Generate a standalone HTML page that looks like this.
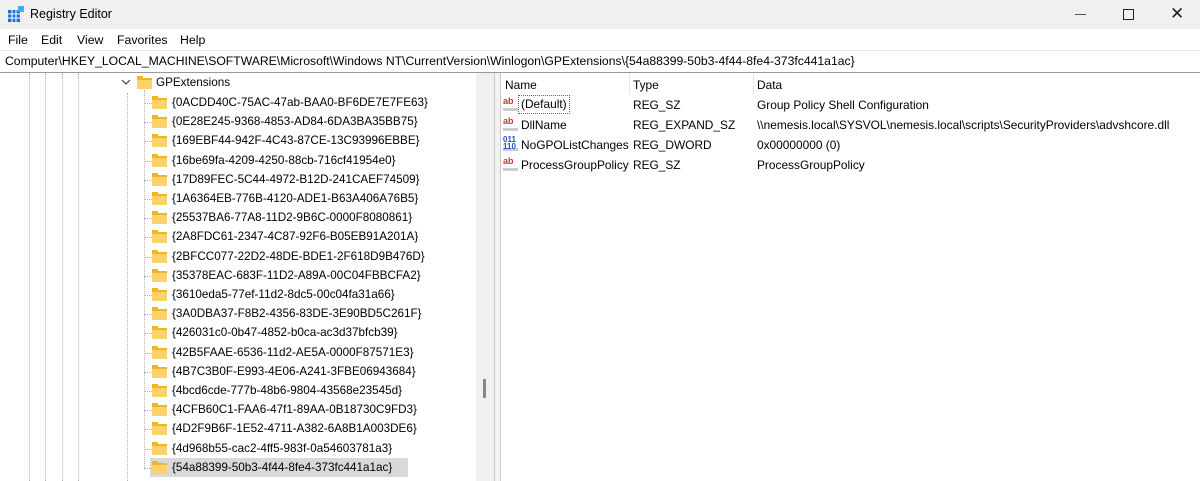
<!DOCTYPE html><html><head><style>
body{margin:0;width:1200px;height:481px;overflow:hidden;background:#fff;font-family:"Liberation Sans",sans-serif;font-size:11.7px;color:#000;position:relative}
.a{position:absolute;white-space:nowrap}
.r{font-size:11.9px}
.fold{position:absolute;width:15px;height:11px;background:#fcd36a;border-top:2px solid #f0b429;box-sizing:border-box}
.fold:before{content:"";position:absolute;left:0;top:-4px;width:6px;height:3px;background:#f0b429}
.vd{position:absolute;width:0;border-left:1px dotted #b0b0b0}
.hd{position:absolute;height:0;border-top:1px dotted #b0b0b0;width:8px}
.ic{position:absolute;width:15px;height:15px;font-size:9px;font-weight:bold;color:#c0392b;line-height:10px;border-bottom:3px solid #ccc;box-sizing:border-box}
</style></head><body>
<div class="a" style="left:0;top:0;width:1200px;height:29px;background:#f0f0f0"></div>
<svg class="a" style="left:8px;top:6px" width="16" height="16"><rect x="0" y="4" width="12" height="12" fill="#1e73d2"/><g stroke="#fff" stroke-width="1"><line x1="0" y1="8" x2="12" y2="8"/><line x1="0" y1="12" x2="12" y2="12"/><line x1="4" y1="4" x2="4" y2="16"/><line x1="8" y1="4" x2="8" y2="16"/></g><rect x="10" y="0" width="6" height="6" fill="#4aa8f0"/></svg>
<div class="a" style="left:30px;top:7px;font-size:12.5px">Registry Editor</div>
<div class="a" style="left:1075px;top:14px;width:11px;border-top:1px solid #555"></div>
<div class="a" style="left:1123px;top:9px;width:9px;height:9px;border:1px solid #222"></div>
<div class="a" style="left:1170px;top:4px;font-size:17px;color:#222">✕</div>
<div class="a" style="left:8px;top:33px;font-size:12.3px">File</div><div class="a" style="left:41px;top:33px;font-size:12.3px">Edit</div><div class="a" style="left:77px;top:33px;font-size:12.3px">View</div><div class="a" style="left:117px;top:33px;font-size:12.3px">Favorites</div><div class="a" style="left:180px;top:33px;font-size:12.3px">Help</div>
<div class="a" style="left:0;top:50px;width:1200px;height:21px;border-top:1px solid #e8e8e8;border-bottom:1px solid #999"></div>
<div class="a" style="left:5px;top:54px;font-size:12.2px">Computer\HKEY_LOCAL_MACHINE\SOFTWARE\Microsoft\Windows NT\CurrentVersion\Winlogon\GPExtensions\{54a88399-50b3-4f44-8fe4-373fc441a1ac}</div>
<div class="vd" style="left:29px;top:73px;height:408px"></div><div class="vd" style="left:45px;top:73px;height:408px"></div><div class="vd" style="left:62px;top:73px;height:408px"></div><div class="vd" style="left:78px;top:73px;height:408px"></div><div class="vd" style="left:127px;top:93px;height:388px"></div><div class="vd" style="left:144px;top:90px;height:378px"></div>
<svg class="a" style="left:121px;top:78px" width="10" height="8"><path d="M1 2L5 6L9 2" stroke="#333" fill="none"/></svg>
<div class="fold" style="left:137px;top:78px"></div><div class="a" style="left:156px;top:76px">GPExtensions</div>
<div class="a" style="left:150px;top:458px;width:258px;height:19px;background:#d9d9d9"></div>
<div id="t"></div>
<div class="a" style="left:476px;top:73px;width:18px;height:408px;background:#f0f0f0"></div>
<div class="a" style="left:483px;top:379px;width:3px;height:19px;background:#888"></div>
<div class="a" style="left:494px;top:73px;width:5px;height:408px;background:#f2f2f2;border-left:1px solid #c8c8c8;border-right:1px solid #c8c8c8"></div>
<div class="a r" style="left:505px;top:78px">Name</div><div class="a r" style="left:633px;top:78px">Type</div><div class="a r" style="left:757px;top:78px">Data</div>
<div class="a" style="left:629px;top:74px;height:20px;border-left:1px solid #e5e5e5"></div><div class="a" style="left:753px;top:74px;height:20px;border-left:1px solid #e5e5e5"></div>
<div class="ic" style="left:503px;top:96px">ab</div><div class="a r" style="left:518px;top:95px;border:1px dotted #666;padding:1px 2px;line-height:15px">(Default)</div><div class="a r" style="left:633px;top:98px">REG_SZ</div><div class="a r" style="left:757px;top:98px">Group Policy Shell Configuration</div>
<div class="ic" style="left:503px;top:116px">ab</div><div class="a r" style="left:521px;top:118px">DllName</div><div class="a r" style="left:633px;top:118px">REG_EXPAND_SZ</div><div class="a r" style="left:757px;top:118px">\\nemesis.local\SYSVOL\nemesis.local\scripts\SecurityProviders\advshcore.dll</div>
<div class="ic" style="left:503px;top:136px;color:#2050c0;font-size:8px;line-height:7px">011<br>110</div><div class="a r" style="left:521px;top:138px">NoGPOListChanges</div><div class="a r" style="left:633px;top:138px">REG_DWORD</div><div class="a r" style="left:757px;top:138px">0x00000000 (0)</div>
<div class="ic" style="left:503px;top:156px">ab</div><div class="a r" style="left:521px;top:158px">ProcessGroupPolicy</div><div class="a r" style="left:633px;top:158px">REG_SZ</div><div class="a r" style="left:757px;top:158px">ProcessGroupPolicy</div>
<script>
var k=["{0ACDD40C-75AC-47ab-BAA0-BF6DE7E7FE63}","{0E28E245-9368-4853-AD84-6DA3BA35BB75}","{169EBF44-942F-4C43-87CE-13C93996EBBE}","{16be69fa-4209-4250-88cb-716cf41954e0}","{17D89FEC-5C44-4972-B12D-241CAEF74509}","{1A6364EB-776B-4120-ADE1-B63A406A76B5}","{25537BA6-77A8-11D2-9B6C-0000F8080861}","{2A8FDC61-2347-4C87-92F6-B05EB91A201A}","{2BFCC077-22D2-48DE-BDE1-2F618D9B476D}","{35378EAC-683F-11D2-A89A-00C04FBBCFA2}","{3610eda5-77ef-11d2-8dc5-00c04fa31a66}","{3A0DBA37-F8B2-4356-83DE-3E90BD5C261F}","{426031c0-0b47-4852-b0ca-ac3d37bfcb39}","{42B5FAAE-6536-11d2-AE5A-0000F87571E3}","{4B7C3B0F-E993-4E06-A241-3FBE06943684}","{4bcd6cde-777b-48b6-9804-43568e23545d}","{4CFB60C1-FAA6-47f1-89AA-0B18730C9FD3}","{4D2F9B6F-1E52-4711-A382-6A8B1A003DE6}","{4d968b55-cac2-4ff5-983f-0a54603781a3}","{54a88399-50b3-4f44-8fe4-373fc441a1ac}"],h="";
for(var i=0;i<k.length;i++){var y=Math.round(96+i*19.2);h+='<div class="hd" style="left:144px;top:'+(y+7)+'px"></div><div class="fold" style="left:152px;top:'+(y+2)+'px"></div><div class="a" style="left:172px;top:'+y+'px">'+k[i]+'</div>';}
document.getElementById("t").innerHTML=h;
</script>
</body></html>
